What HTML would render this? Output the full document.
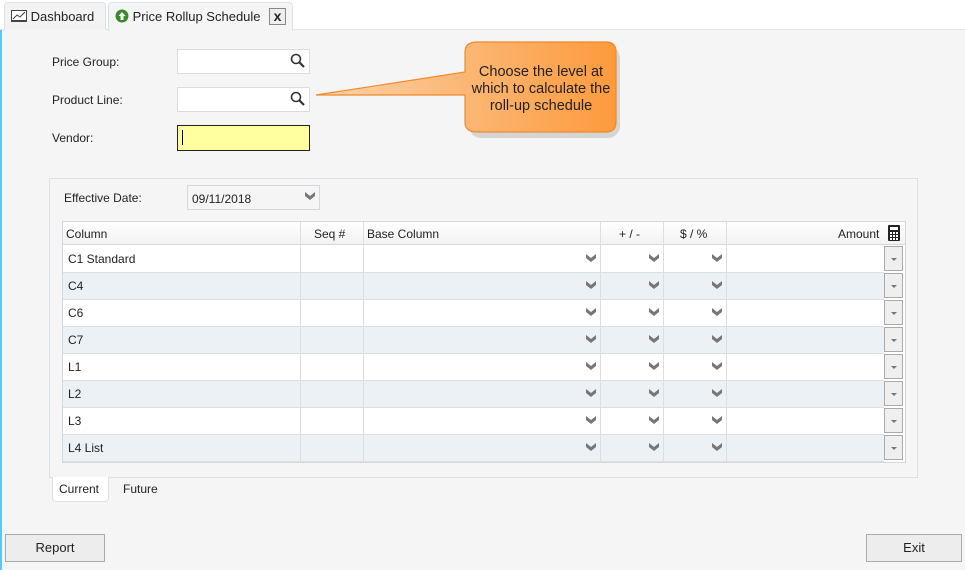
<!DOCTYPE html>
<html><head><meta charset="utf-8"><style>
*{box-sizing:border-box;margin:0;padding:0}
body{width:965px;height:570px;overflow:hidden;background:#f5f5f5;font-family:"Liberation Sans","DejaVu Sans",sans-serif;font-size:12px;color:#222;position:relative}
.a{position:absolute}
.top{left:0;top:0;width:965px;height:30px;background:#fff;border-bottom:1px solid #dbe3ea}
.lb{left:0;top:30px;width:2px;height:540px;background:#63c6ef}
.tab{top:2px;height:28px;border:1px solid #dbe3ea;border-bottom:none;border-radius:4px 4px 0 0;padding:6px 0 0 0;font-size:13px}
.inp{background:#fff;border:1px solid #d9dde2;height:25px}
.lbl{font-size:12px}
.row{position:absolute;left:63px;width:821px;height:27px;border-bottom:1px solid #dcdfe2}
.row span{position:absolute;left:5px;top:6px}
.dd{position:absolute;left:884px;width:19px;height:25px;background:#efefef;border:1px solid #aaa}
.dd:after{content:"";position:absolute;left:6px;top:11px;border:3px solid transparent;border-top:3px solid #777}
.btn{background:#ededed;border:1px solid #aaa;height:28px;text-align:center;line-height:26px;font-size:13px}
</style></head><body>
<div class="a top"></div>
<div class="a lb"></div>
<div class="a tab" style="left:4px;width:102px;background:#f3f3f3;padding-left:6px">
<svg width="16" height="12" style="vertical-align:-1px"><rect x="0.5" y="0.5" width="15" height="11" fill="#fff" stroke="#444"/><path d="M2 9 L6 5 L9 7 L14 2" stroke="#444" fill="none"/><path d="M1 10.5H15" stroke="#444"/></svg> Dashboard</div>
<div class="a tab" style="left:108px;width:185px;background:#f5f5f5;height:29px;padding-left:6px">
<svg width="14" height="14" style="vertical-align:-2px"><circle cx="7" cy="7" r="6.5" fill="#3a8a2a"/><path d="M7 3 L10.5 7 H8.5 V11 H5.5 V7 H3.5Z" fill="#fff"/></svg> Price Rollup Schedule</div>
<div class="a" style="left:269px;top:8px;width:17px;height:17px;border:1px solid #888;background:#eee;font-weight:bold;font-size:14px;text-align:center;line-height:14px">x</div>

<div class="a lbl" style="left:52px;top:55px">Price Group:</div>
<div class="a lbl" style="left:52px;top:93px">Product Line:</div>
<div class="a lbl" style="left:52px;top:131px">Vendor:</div>
<div class="a inp" style="left:177px;top:49px;width:133px"></div>
<div class="a inp" style="left:177px;top:87px;width:133px"></div>
<svg class="a" style="left:290px;top:53px" width="16" height="16"><circle cx="6" cy="6" r="4.5" stroke="#333" stroke-width="1.6" fill="none"/><path d="M9.5 9.5 L14 14" stroke="#333" stroke-width="2.2"/></svg>
<svg class="a" style="left:290px;top:91px" width="16" height="16"><circle cx="6" cy="6" r="4.5" stroke="#333" stroke-width="1.6" fill="none"/><path d="M9.5 9.5 L14 14" stroke="#333" stroke-width="2.2"/></svg>
<div class="a" style="left:177px;top:125px;width:133px;height:26px;background:#ffff9f;border:1px solid #222"></div>
<div class="a" style="left:182px;top:130px;width:1px;height:15px;background:#002"></div>

<svg class="a" style="left:310px;top:38px" width="320" height="104">
<defs><linearGradient id="g" x1="0" x2="1"><stop offset="0" stop-color="#fbd3ac"/><stop offset="1" stop-color="#fd9a3c"/></linearGradient></defs>
<rect x="159" y="8" width="151" height="92" rx="12" fill="#c8c8c8" opacity=".7"/>
<path d="M167 4 H296 Q306 4 306 14 V84 Q306 94 296 94 H167 Q155 94 155 84 V57 L6 57 L155 34 V14 Q155 4 167 4Z" fill="url(#g)" stroke="#f08a2c" stroke-width="1.2"/>
<text x="231" y="38" text-anchor="middle" font-family="Liberation Sans,sans-serif" font-size="14.5" fill="#222">Choose the level at</text>
<text x="231" y="55" text-anchor="middle" font-family="Liberation Sans,sans-serif" font-size="14.5" fill="#222">which to calculate the</text>
<text x="231" y="72" text-anchor="middle" font-family="Liberation Sans,sans-serif" font-size="14.5" fill="#222">roll-up schedule</text>
</svg>

<div class="a" style="left:49px;top:178px;width:869px;height:300px;border:1px solid #dbe1e6"></div>
<div class="a lbl" style="left:64px;top:191px">Effective Date:</div>
<div class="a" style="left:187px;top:185px;width:133px;height:25px;border:1px solid #d4d9de;background:#f5f5f5;padding:6px 0 0 4px">09/11/2018</div>
<svg class="a" style="left:305px;top:192px" width="10" height="9"><path d="M0 0 L5 4 L10 0 V4 L5 8 L0 4Z" fill="#777"/></svg>

<div class="a" style="left:62px;top:221px;width:844px;height:242px;border:1px solid #d4d9de;background:#fff"></div>
<div class="a" style="left:63px;top:222px;width:842px;height:23px;background:linear-gradient(#fff,#f1f2f3);border-bottom:1px solid #d4d9de"></div>
<div class="a" style="left:66px;top:227px">Column</div>
<div class="a" style="left:314px;top:227px">Seq #</div>
<div class="a" style="left:367px;top:227px">Base Column</div>
<div class="a" style="left:619px;top:227px">+ / -</div>
<div class="a" style="left:680px;top:227px">$ / %</div>
<div class="a" style="left:838px;top:227px">Amount</div>
<svg class="a" style="left:888px;top:225px" width="12" height="16"><rect x="0" y="0" width="12" height="16" rx="1" fill="#222"/><rect x="2" y="2" width="8" height="3" fill="#fff"/><g fill="#fff"><rect x="2" y="7" width="2" height="2"/><rect x="5" y="7" width="2" height="2"/><rect x="8" y="7" width="2" height="2"/><rect x="2" y="10" width="2" height="2"/><rect x="5" y="10" width="2" height="2"/><rect x="8" y="10" width="2" height="2"/><rect x="2" y="13" width="2" height="2"/><rect x="5" y="13" width="2" height="2"/><rect x="8" y="13" width="2" height="2"/></g></svg>

<div id="rows"></div>
<script>
var names=["C1 Standard","C4","C6","C7","L1","L2","L3","L4 List"],h="";
names.forEach(function(n,i){var t=246+i*27,bg=i%2?"#ecf1f5":"#fff";
h+='<div class="row" style="top:'+t+'px;background:'+bg+'"><span>'+n+'</span></div>';
[586,649,712].forEach(function(x){h+='<svg style="position:absolute;left:'+x+'px;top:'+(t+8)+'px" width="10" height="9"><path d="M0 0 L5 4 L10 0 V4 L5 8 L0 4Z" fill="#777"/></svg>';});
h+='<div class="dd" style="top:'+(t)+'px"></div>';});
[300,363,600,663,726].forEach(function(x){h+='<div class="a" style="left:'+x+'px;top:222px;width:1px;height:240px;background:#dcdfe2"></div>';});
document.getElementById("rows").innerHTML=h;
</script>

<div class="a" style="left:52px;top:477px;width:57px;height:25px;background:#fff;border:1px solid #dbe1e6;border-top:none;border-radius:0 0 4px 4px"></div>
<div class="a" style="left:59px;top:482px">Current</div>
<div class="a" style="left:123px;top:482px">Future</div>

<div class="a btn" style="left:5px;top:534px;width:100px">Report</div>
<div class="a btn" style="left:866px;top:534px;width:96px">Exit</div>
</body></html>
